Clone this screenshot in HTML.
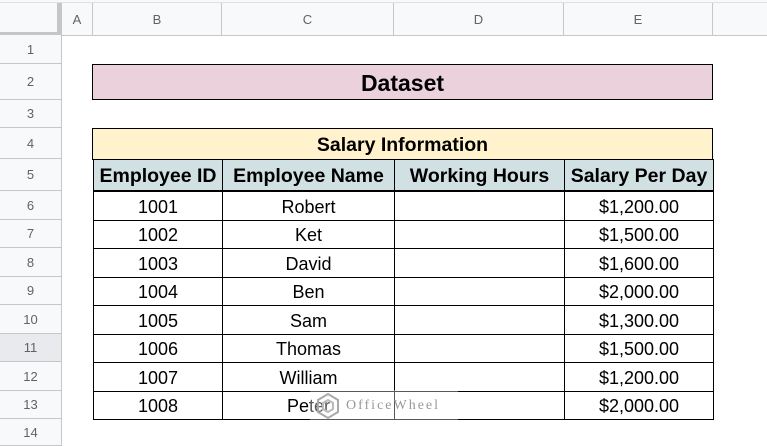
<!DOCTYPE html>
<html><head><meta charset="utf-8"><style>
body{margin:0;width:767px;height:446px;overflow:hidden;background:#fff;font-family:"Liberation Sans",Arial,sans-serif;position:relative}
.a{position:absolute;box-sizing:border-box}
.ch{top:3px;height:33px;background:#f8f9fa;border-right:1px solid #c7c7c7;border-bottom:1px solid #c7c7c7;color:#5f6368;font-size:13px;display:flex;align-items:center;justify-content:center}
.rh{left:0;width:62px;background:#f8f9fa;border-right:1px solid #c7c7c7;border-bottom:1px solid #c7c7c7;color:#5f6368;font-size:13px;display:flex;align-items:center;justify-content:center}
.c{border:1px solid #000;display:flex;align-items:center;justify-content:center;font-size:18px;color:#000;margin:-1px 0 0 -1px;padding-top:2px}
.h{font-weight:bold;font-size:19.5px;background:#d0e0e3}
</style></head><body>
<div class="a" style="left:0;top:0;width:767px;height:3px;background:#f8f9fa;border-bottom:1px solid #e0e0e0"></div>
<div class="a" style="left:0;top:3px;width:62px;height:33px;background:#f8f9fa;border-right:5px solid #c4c7c5;border-bottom:4px solid #c4c7c5"></div>
<div class="a ch" style="left:62px;width:31px">A</div>
<div class="a ch" style="left:93px;width:129px">B</div>
<div class="a ch" style="left:222px;width:172px">C</div>
<div class="a ch" style="left:394px;width:170px">D</div>
<div class="a ch" style="left:564px;width:149px">E</div>
<div class="a ch" style="left:713px;width:60px"></div>
<div id="rows"></div>
<script>
var t=[35,64,100,128,159,191,220,248,277,305,334,362,391,419,446],h='';
for(var i=0;i<14;i++){h+='<div class="a rh" style="top:'+t[i]+'px;height:'+(t[i+1]-t[i])+'px'+(i==10?';background:#e8eaed':'')+'">'+(i+1)+'</div>';}
var xs=[93,222,394,564,713];
var d=[['1001','Robert','$1,200.00'],['1002','Ket','$1,500.00'],['1003','David','$1,600.00'],['1004','Ben','$2,000.00'],['1005','Sam','$1,300.00'],['1006','Thomas','$1,500.00'],['1007','William','$1,200.00'],['1008','Peter','$2,000.00']];
function cell(x,y,w,hh,txt,cls,st){return '<div class="a c '+(cls||'')+'" style="left:'+x+'px;top:'+y+'px;width:'+(w+1)+'px;height:'+(hh+1)+'px;'+(st||'')+'">'+txt+'</div>';}
h+=cell(93,65,620,35,'Dataset','','font-weight:bold;font-size:23px;background:#ead1dc');
h+=cell(93,129,620,31,'Salary Information','','font-weight:bold;font-size:19.5px;background:#fff2cc');
var hd=['Employee ID','Employee Name','Working Hours','Salary Per Day'];
for(var j=0;j<4;j++)h+=cell(xs[j]+1,160,xs[j+1]-xs[j],31,hd[j],'h');
for(var r=0;r<8;r++){var y=t[r+5]+1,hh=t[r+6]-t[r+5];var v=[d[r][0],d[r][1],'',d[r][2]];
for(var j=0;j<4;j++)h+=cell(xs[j]+1,y,xs[j+1]-xs[j],hh,v[j],'');}
document.getElementById('rows').innerHTML=h;
</script>
<div class="a" style="left:310px;top:390px;width:148px;height:32px;background:rgba(255,255,255,.35);display:flex;align-items:center;gap:6px;padding-left:6px">
<svg width="24" height="28" viewBox="0 0 24 28"><path d="M12 2L22 8V20L12 26L2 20V8Z" fill="none" stroke="#aaa" stroke-width="2"/><path d="M12 8L17 11V17L12 20L7 17V11Z" fill="none" stroke="#bbb" stroke-width="2"/></svg>
<span style="font-family:'Liberation Serif',serif;font-size:14px;letter-spacing:2px;color:#999">OfficeWheel</span></div>
</body></html>
